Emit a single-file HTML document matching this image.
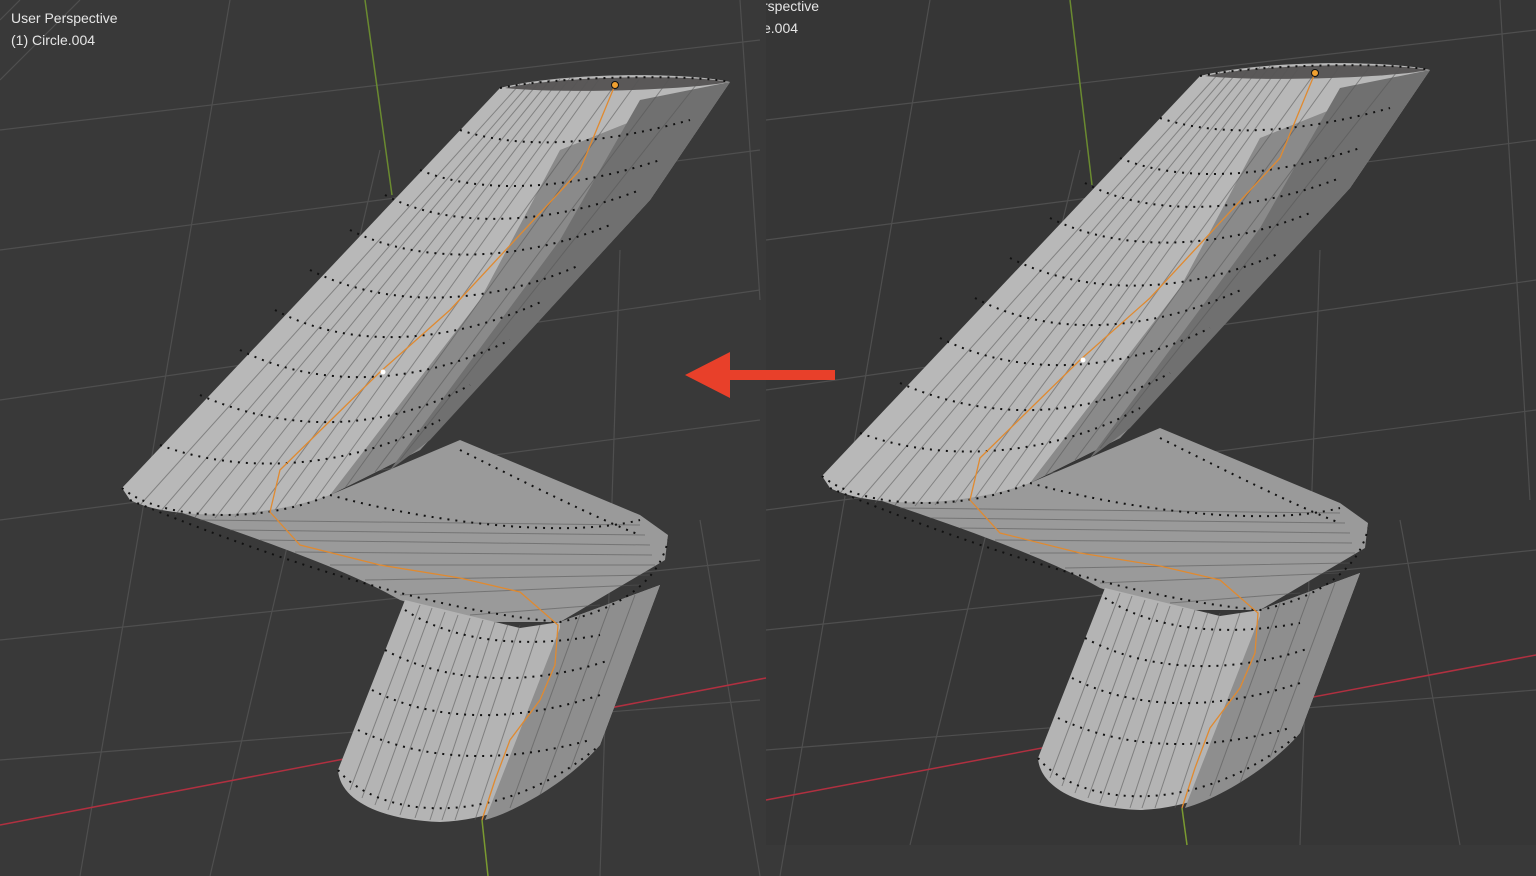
<!DOCTYPE html>
<html><head><style>
body{margin:0;width:1536px;height:876px;overflow:hidden;background:#393939;font-family:"Liberation Sans",sans-serif}
.t{position:absolute;color:#e6e6e6;font-size:14px}
</style></head><body>
<svg width="1536" height="876" style="position:absolute;left:0;top:0">
<defs>
<g id="obj">
 <path d="M130,495 C200,520 330,560 400,600 L470,622 L560,622 L665,560 L668,535 L640,515 L460,440 L330,495 Z" fill="#9a9a9a"/>
 <path d="M405,600 L520,628 L560,622 L660,585 L600,745 C560,790 500,820 440,822 C380,820 340,800 338,770 Z" fill="#b4b4b4"/>
 <path d="M560,622 L660,585 L600,745 C570,780 520,810 485,820 L560,628 Z" fill="#8e8e8e"/>
 <path d="M122,488 L500,88 C560,72 690,72 730,82 L650,200 L420,450 L330,495 C260,520 170,520 130,500 Z" fill="#b8b8b8"/>
 <path d="M560,150 L730,82 L650,200 L420,450 L330,495 L480,300 Z" fill="#8a8a8a"/>
 <path d="M640,100 L730,82 L650,200 L430,440 L390,470 L560,240 Z" fill="#707070"/>
 <path d="M505,88 C560,76 690,74 728,82 C690,90 560,94 505,88 Z" fill="#5a5858"/>
 <g stroke="#555" stroke-opacity="0.55" stroke-width="1" fill="none">
  <path d="M140,505 L520,84 M175,515 L540,81 M215,518 L560,79 M255,515 L580,78 M295,505 L600,78 M345,488 L640,78 M375,472 L670,78 M400,460 L700,80 M160,512 L530,83 M195,517 L550,80 M235,517 L570,78 M275,510 L590,78 M315,500 L620,78"/>
  <path d="M200,520 L640,525 M260,540 L650,545 M330,565 L655,565 M400,595 L640,585 M470,615 L600,605 M230,530 L645,535 M295,552 L652,555 M365,580 L650,575"/>
  <path d="M420,605 L350,790 M445,612 L375,805 M470,618 L400,815 M495,622 L430,820 M520,625 L455,820 M540,625 L475,820 M580,615 L510,808 M610,605 L540,795 M635,595 L570,770 M432,608 L362,798 M458,615 L388,810 M483,620 L415,818 M508,624 L442,820"/>
 </g>
 <g fill="none" stroke="#111" stroke-width="2" stroke-dasharray="2 6">
  <path d="M500,88 C560,76 690,74 730,82"/>
  <path d="M460,130 C520,150 600,145 690,120"/>
  <path d="M420,170 C480,195 570,190 660,160"/>
  <path d="M385,195 C450,230 550,225 640,190"/>
  <path d="M350,230 C420,265 520,262 610,225"/>
  <path d="M310,270 C390,310 490,305 580,265"/>
  <path d="M275,310 C350,350 450,345 545,300"/>
  <path d="M240,350 C320,390 420,385 510,340"/>
  <path d="M200,395 C290,435 390,430 470,385"/>
  <path d="M160,445 C240,475 350,470 440,420"/>
  <path d="M122,488 C160,520 260,525 330,495"/>
  <path d="M130,500 C250,550 420,610 560,622 C620,610 660,580 668,540"/>
  <path d="M330,495 C420,520 560,540 640,520"/>
  <path d="M460,450 C520,480 600,520 640,535"/>
  <path d="M405,610 C450,640 520,650 600,635"/>
  <path d="M385,650 C440,680 520,690 610,660"/>
  <path d="M372,690 C430,720 510,725 600,695"/>
  <path d="M358,730 C420,760 500,765 590,740"/>
  <path d="M338,770 C380,820 500,830 600,745"/>
 </g>
 <path d="M615,85 L580,170 L450,310 L380,372 L280,470 L270,512 L300,545 L380,565 L460,578 L520,592 L558,625 L555,665 L540,700 L510,740 L495,780 L482,820" fill="none" stroke="#e08a30" stroke-width="1.3"/>
 <circle cx="615" cy="85" r="3.5" fill="#f0a030" stroke="#111"/>
 <circle cx="383" cy="372" r="2.5" fill="#fff"/>
</g>
</defs>
<rect x="766" y="0" width="770" height="845" fill="#363636"/>
<g stroke="#4f4f4f" stroke-width="1.2" fill="none">
 <path d="M0,130 L760,40 M0,250 L760,150 M0,400 L760,290 M0,520 L760,420 M0,640 L760,560 M0,760 L760,700"/>
 <path d="M80,0 L0,80 M230,0 L80,876 M380,150 L210,876 M620,250 L600,876 M700,520 L760,876 M760,300 L740,0 M20,0 L0,20"/>
 <path d="M766,120 L1536,30 M766,240 L1536,140 M766,390 L1536,280 M766,510 L1536,410 M766,630 L1536,550 M766,750 L1536,690"/>
 <path d="M930,0 L780,876 M1080,150 L910,845 M1320,250 L1300,845 M1400,520 L1460,845 M1500,0 L1530,500"/>
</g>
<path d="M365,0 L392,195" stroke="#6a8a30" stroke-width="1.5"/>
<path d="M482,820 L488,876" stroke="#7a9a30" stroke-width="1.5"/>
<path d="M1070,0 L1092,185" stroke="#6a8a30" stroke-width="1.5"/>
<path d="M1182,808 L1187,845" stroke="#7a9a30" stroke-width="1.5"/>
<path d="M0,825 L766,678" stroke="#b03040" stroke-width="1.5"/>
<path d="M766,800 L1536,655" stroke="#b03040" stroke-width="1.5"/>
<use href="#obj"/>
<use href="#obj" transform="translate(700,-12)"/>
<path d="M835,370 L730,370 L730,352 L685,375 L730,398 L730,380 L835,380 Z" fill="#e8402a"/>
</svg>
<div class="t" style="left:11px;top:10px">User Perspective</div>
<div class="t" style="left:11px;top:32px">(1) Circle.004</div>
<div class="t" style="left:766px;top:-2px;width:60px;overflow:hidden"><span style="margin-left:-3px;white-space:nowrap">rspective</span></div>
<div class="t" style="left:766px;top:20px;width:60px;overflow:hidden"><span style="margin-left:-3px">e.004</span></div>
</body></html>
